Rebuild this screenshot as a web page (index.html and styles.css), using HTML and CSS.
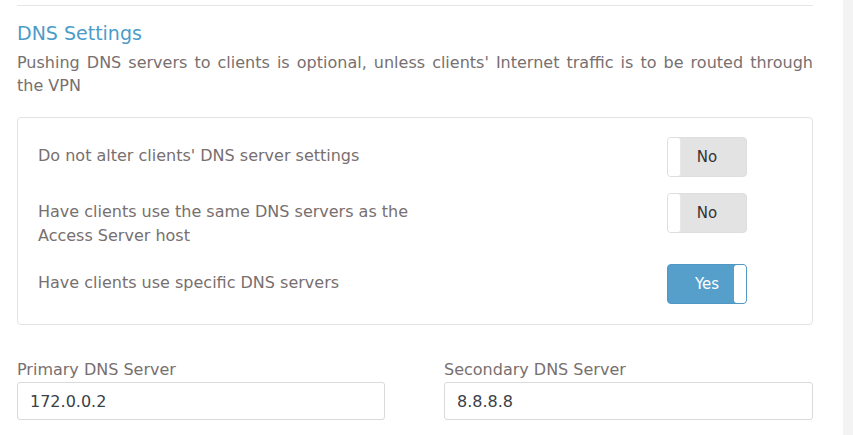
FILE: index.html
```html
<!DOCTYPE html>
<html>
<head>
<meta charset="utf-8">
<link rel="stylesheet" href="styles.css">
</head>
<body>
<div class="page">
  <section class="section">
    <h2 class="title">DNS Settings</h2>
    <p class="desc">Pushing DNS servers to clients is optional, unless clients' Internet traffic is to be routed through the VPN</p>
    <div class="box">
      <div class="row">
        <div class="label">Do not alter clients' DNS server settings</div>
        <div class="toggle off"><span class="knob"></span><span class="ttext">No</span></div>
      </div>
      <div class="row">
        <div class="label">Have clients use the same DNS servers as the Access Server host</div>
        <div class="toggle off"><span class="knob"></span><span class="ttext">No</span></div>
      </div>
      <div class="row">
        <div class="label">Have clients use specific DNS servers</div>
        <div class="toggle on"><span class="ttext">Yes</span><span class="knob"></span></div>
      </div>
    </div>
    <div class="fields">
      <div class="field">
        <label class="flabel">Primary DNS Server</label>
        <div class="input">172.0.0.2</div>
      </div>
      <div class="field">
        <label class="flabel">Secondary DNS Server</label>
        <div class="input">8.8.8.8</div>
      </div>
    </div>
  </section>
</div>
</body>
</html>
```

FILE: styles.css
```css
html, body {
  margin: 0;
  padding: 0;
  background: #f3f3f3;
  height: 100%;
}
body {
  font-family: "DejaVu Sans", Verdana, sans-serif;
  color: #786f6f;
}
.page {
  width: 843px;
  min-height: 100%;
  background: #ffffff;
  padding: 5px 0 0 0;
  box-sizing: border-box;
}
.section {
  margin-left: 17px;
  width: 796px;
  border-top: 1px solid #e6e6e6;
}
.title {
  margin: 14px 0 0 0;
  font-size: 19px;
  line-height: 26px;
  font-weight: normal;
  color: #4d9cc8;
}
.desc {
  margin: 5px 0 0 0;
  font-size: 16px;
  line-height: 23px;
  text-align: justify;
}
.box {
  margin-top: 20px;
  border: 1px solid #e3e3e3;
  border-radius: 4px;
  padding: 19px 20px 20px 20px;
}
.row {
  display: flex;
  justify-content: space-between;
  align-items: flex-start;
  margin-bottom: 16px;
}
.row:last-child {
  margin-bottom: 0;
}
.label {
  width: 380px;
  padding-top: 7px;
  font-size: 16px;
  line-height: 24px;
}
.toggle {
  position: relative;
  width: 80px;
  height: 40px;
  box-sizing: border-box;
  border-radius: 4px;
  margin-right: 45px;
  display: flex;
  align-items: center;
  justify-content: center;
  font-size: 15px;
}
.toggle.off {
  background: #e3e3e3;
  border: 1px solid #dedede;
  color: #333333;
}
.toggle.on {
  background: #559fca;
  border: 1px solid #4f97c4;
  color: #ffffff;
}
.knob {
  position: absolute;
  top: 0;
  bottom: 0;
  width: 12px;
  background: #ffffff;
  border-radius: 3px;
}
.toggle.off .knob {
  left: 0;
  border-right: 1px solid #e8e8e8;
}
.toggle.on .knob {
  right: 0;
}
.fields {
  display: grid;
  grid-template-columns: 368px 369px;
  column-gap: 59px;
  margin-top: 33px;
}
.flabel {
  display: block;
  font-size: 16px;
  line-height: 24px;
}
.input {
  height: 38px;
  box-sizing: border-box;
  border: 1px solid #dadada;
  border-radius: 3px;
  padding: 0 12px;
  display: flex;
  align-items: center;
  font-size: 16px;
  color: #3a3f48;
}
```
